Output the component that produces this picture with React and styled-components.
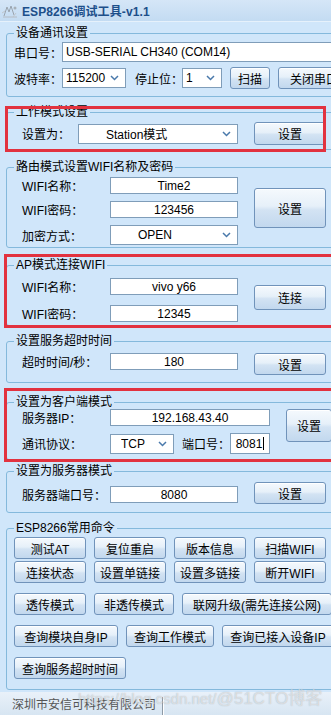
import React from 'react'
import styled, { createGlobalStyle } from 'styled-components'

const GlobalStyle = createGlobalStyle`
  html, body {
    margin: 0;
    padding: 0;
    overflow: hidden;
    background: #d0e6fa;
  }
  body {
    font-family: "Liberation Sans", "Noto Sans CJK SC", sans-serif;
    font-size: 12px;
    color: #000;
  }
`

const Window = styled.div`
  width: 350px;
  height: 715px;
  display: flex;
  flex-direction: column;
  background: #d0e6fa;
  position: relative;
  overflow: hidden;
`

const TitleBar = styled.div`
  height: 21px;
  flex-shrink: 0;
  display: flex;
  align-items: center;
  gap: 3px;
  padding-left: 1px;
  background: linear-gradient(#d5e6f7, #c3dbf2);
  border-bottom: 1px solid #e6f1fb;
`

const Title = styled.span`
  font-weight: bold;
  font-size: 12px;
  color: #1d4f8a;
  letter-spacing: 0.1px;
`

const Content = styled.div`
  flex: 1;
  display: flex;
  flex-direction: column;
  padding-left: 6px;
`

const Group = styled.fieldset`
  margin: ${(p) => p.$mt}px 0 0 0;
  padding: ${(p) => p.$pt}px 0 ${(p) => p.$pb}px 7px;
  border: 1px solid #84b9dc;
  border-radius: 3px;
  min-width: 0;
`

const Legend = styled.legend`
  padding: 0 2px;
  margin-left: 0;
  font-size: 12px;
  line-height: 14px;
`

/* red annotation frame drawn over a group */
const Marked = styled.div`
  position: relative;
  &::after {
    content: "";
    position: absolute;
    top: ${(p) => p.$top}px;
    left: ${(p) => p.$left}px;
    width: ${(p) => p.$w}px;
    height: ${(p) => p.$h}px;
    box-sizing: border-box;
    border: 3px solid #e2323f;
    pointer-events: none;
  }
`

const Inset = styled.div`
  display: flex;
  flex-direction: column;
  gap: ${(p) => p.$gap || 0}px;
  padding-left: ${(p) => p.$indent || 0}px;
`

const Row = styled.div`
  display: flex;
  align-items: ${(p) => p.$align || 'center'};
  gap: ${(p) => p.$gap || 0}px;
`

const Split = styled.div`
  display: flex;
  align-items: flex-start;
  gap: 16px;
`

const Column = styled.div`
  display: flex;
  flex-direction: column;
  gap: ${(p) => p.$gap}px;
`

const Label = styled.span`
  width: ${(p) => p.$w}px;
  flex-shrink: 0;
  white-space: nowrap;
  font-size: 12px;
`

const Field = styled.div`
  width: ${(p) => p.$w}px;
  height: ${(p) => p.$h || 17}px;
  flex-shrink: 0;
  box-sizing: border-box;
  background: #fff;
  border: 1px solid #7f9db9;
  display: flex;
  align-items: center;
  justify-content: center;
  font-size: 12px;
`

const Caret = styled.span`
  display: inline-block;
  width: 1px;
  height: 13px;
  margin-left: 1px;
  background: #000;
`

const ComboBox = styled.div`
  width: ${(p) => p.$w}px;
  height: 20px;
  flex-shrink: 0;
  box-sizing: border-box;
  background: #fff;
  border: 1px solid #7f9db9;
  display: flex;
  align-items: center;
  padding-left: ${(p) => p.$pad || 3}px;
  font-size: 12px;
`

const ComboText = styled.span`
  flex: 1;
  white-space: nowrap;
  overflow: hidden;
`

const Button = styled.div`
  width: ${(p) => p.$w}px;
  height: ${(p) => p.$h || 22}px;
  margin-top: ${(p) => p.$mt || 0}px;
  flex-shrink: 0;
  box-sizing: border-box;
  border: 1px solid #7093ba;
  border-radius: 3px;
  background: linear-gradient(#f5f9fd 0%, #e6f0f9 45%, #d3e3f3 55%, #c2d8ee 100%);
  box-shadow: inset 0 1px 0 #ffffff;
  display: flex;
  align-items: center;
  justify-content: center;
  white-space: nowrap;
  font-size: 12px;
`

const CmdRows = styled.div`
  display: flex;
  flex-direction: column;
`

const CmdRow = styled.div`
  display: flex;
  gap: 8px;
  margin-top: ${(p) => p.$mt}px;
`

const StatusBar = styled.div`
  flex: 1;
  margin-top: 2px;
  display: flex;
  align-items: center;
  background: linear-gradient(#e9f1f9, #d7e5f2);
`

const StatusText = styled.span`
  padding-left: 12px;
  width: 150px;
  color: #555;
  font-size: 12px;
`

const StatusSep = styled.span`
  align-self: flex-end;
  height: 18px;
  width: 1px;
  background: #8e9aa6;
  border-right: 1px solid #fff;
`

const Watermark = styled.div`
  position: absolute;
  left: 78px;
  top: 684px;
  font-family: "Liberation Sans", "Noto Sans CJK SC", sans-serif;
  font-size: 15px;
  color: rgba(255, 255, 255, 0.55);
  text-shadow: 0 0 1px rgba(110, 120, 130, 0.55);
  white-space: nowrap;
  pointer-events: none;
  span {
    font-size: 17px;
  }
`

function Chevron() {
  return (
    <svg width="9" height="6" viewBox="0 0 9 6" style={{ marginRight: 6, flexShrink: 0 }}>
      <polyline points="1,1 4.5,4.5 8,1" fill="none" stroke="#4a79ab" strokeWidth="1.5" />
    </svg>
  )
}

function Combo({ w, pad, children }) {
  return (
    <ComboBox $w={w} $pad={pad}>
      <ComboText>{children}</ComboText>
      <Chevron />
    </ComboBox>
  )
}

function AppIcon() {
  return (
    <svg width="18" height="16" viewBox="0 0 18 16">
      <path d="M3 13 L6 4 L8 9 L10 3 L13 12" fill="none" stroke="#9aa4ae" strokeWidth="1" />
      <path d="M2 14 H16" stroke="#b5bcc4" strokeWidth="1" />
      <circle cx="14" cy="5" r="1.5" fill="#a8b0b8" />
      <path d="M1 10 L4 8 M12 14 L15 10" stroke="#c0c6cc" strokeWidth="1" />
    </svg>
  )
}

export default function App() {
  const commands = [
    { mt: 0, items: [['测试AT', 72], ['复位重启', 72], ['版本信息', 72], ['扫描WIFI', 72]] },
    { mt: 2, items: [['连接状态', 72], ['设置单链接', 72], ['设置多链接', 72], ['断开WIFI', 72]] },
    { mt: 10, items: [['透传模式', 72], ['非透传模式', 80], ['联网升级(需先连接公网)', 150]] },
    { mt: 10, items: [['查询模块自身IP', 104], ['查询工作模式', 88], ['查询已接入设备IP', 112]] },
    { mt: 10, items: [['查询服务超时时间', 112]] },
  ]

  return (
    <Window>
      <GlobalStyle />
      <TitleBar>
        <AppIcon />
        <Title>ESP8266调试工具-v1.1</Title>
      </TitleBar>

      <Content>
        <Group $mt={4} $pt={2} $pb={7}>
          <Legend>设备通讯设置</Legend>
          <Inset $gap={5}>
            <Row>
              <Label $w={48}>串口号：</Label>
              <Combo w={290}>USB-SERIAL CH340 (COM14)</Combo>
            </Row>
            <Row>
              <Label $w={48}>波特率：</Label>
              <Combo w={64}>115200</Combo>
              <Label $w={47} style={{ marginLeft: 9 }}>停止位：</Label>
              <Combo w={40}>1</Combo>
              <Button $w={40} style={{ marginLeft: 8 }}>扫描</Button>
              <Button $w={72} style={{ marginLeft: 8 }}>关闭串口</Button>
            </Row>
          </Inset>
        </Group>

        <Marked $top={9} $left={-1} $w={321} $h={46}>
          <Group $mt={8} $pt={3} $pb={4}>
            <Legend>工作模式设置</Legend>
            <Inset $indent={8}>
              <Row $gap={16}>
                <Label $w={56} style={{ marginRight: -16 }}>设置为：</Label>
                <Combo w={160} pad={27}>Station模式</Combo>
                <Button $w={72} $h={23}>设置</Button>
              </Row>
            </Inset>
          </Group>
        </Marked>

        <Group $mt={10} $pt={3} $pb={2}>
          <Legend>路由模式设置WIFI名称及密码</Legend>
          <Inset $indent={8}>
            <Split>
              <Column $gap={7}>
                <Row>
                  <Label $w={88}>WIFI名称：</Label>
                  <Field $w={128}>Time2</Field>
                </Row>
                <Row>
                  <Label $w={88}>WIFI密码：</Label>
                  <Field $w={128}>123456</Field>
                </Row>
                <Row>
                  <Label $w={88}>加密方式：</Label>
                  <Combo w={128} pad={27}>OPEN</Combo>
                </Row>
              </Column>
              <Button $w={72} $h={40} $mt={11}>设置</Button>
            </Split>
          </Inset>
        </Group>

        <Marked $top={6} $left={-2} $w={340} $h={74}>
          <Group $mt={10} $pt={6} $pb={3}>
            <Legend>AP模式连接WIFI</Legend>
            <Inset $indent={8}>
              <Split>
                <Column $gap={10}>
                  <Row>
                    <Label $w={88}>WIFI名称：</Label>
                    <Field $w={128}>vivo y66</Field>
                  </Row>
                  <Row>
                    <Label $w={88}>WIFI密码：</Label>
                    <Field $w={128}>12345</Field>
                  </Row>
                </Column>
                <Button $w={72} $h={25} $mt={7}>连接</Button>
              </Split>
            </Inset>
          </Group>
        </Marked>

        <Group $mt={8} $pt={5} $pb={7}>
          <Legend>设置服务超时时间</Legend>
          <Inset $indent={8}>
            <Split>
              <Row>
                <Label $w={88}>超时时间/秒：</Label>
                <Field $w={128}>180</Field>
              </Row>
              <Button $w={72}>设置</Button>
            </Split>
          </Inset>
        </Group>

        <Marked $top={5} $left={-2} $w={340} $h={74}>
          <Group $mt={12} $pt={0} $pb={5}>
            <Legend>设置为客户端模式</Legend>
            <Inset $indent={8}>
              <Split>
                <Column $gap={7}>
                  <Row>
                    <Label $w={88}>服务器IP：</Label>
                    <Field $w={160}>192.168.43.40</Field>
                  </Row>
                  <Row>
                    <Label $w={88}>通讯协议：</Label>
                    <Combo w={64} pad={10}>TCP</Combo>
                    <Label $w={48} style={{ marginLeft: 8 }}>端口号：</Label>
                    <Field $w={40} $h={21}>8081<Caret /></Field>
                  </Row>
                </Column>
                <Button $w={46} $h={33}>设置</Button>
              </Split>
            </Inset>
          </Group>
        </Marked>

        <Group $mt={4} $pt={4} $pb={8}>
          <Legend>设置为服务器模式</Legend>
          <Inset $indent={8}>
            <Split>
              <Row style={{ marginTop: 4 }}>
                <Label $w={88}>服务器端口号：</Label>
                <Field $w={128}>8080</Field>
              </Row>
              <Button $w={72}>设置</Button>
            </Split>
          </Inset>
        </Group>

        <Group $mt={8} $pt={2} $pb={10}>
          <Legend>ESP8266常用命令</Legend>
          <CmdRows>
            {commands.map((row, i) => (
              <CmdRow key={i} $mt={row.mt}>
                {row.items.map(([text, w]) => (
                  <Button key={text} $w={w}>{text}</Button>
                ))}
              </CmdRow>
            ))}
          </CmdRows>
        </Group>
      </Content>

      <StatusBar>
        <StatusText>深圳市安信可科技有限公司</StatusText>
        <StatusSep />
      </StatusBar>

      <Watermark>
        https://blog.csdn.net/<span>@51CTO博客</span>
      </Watermark>
    </Window>
  )
}
